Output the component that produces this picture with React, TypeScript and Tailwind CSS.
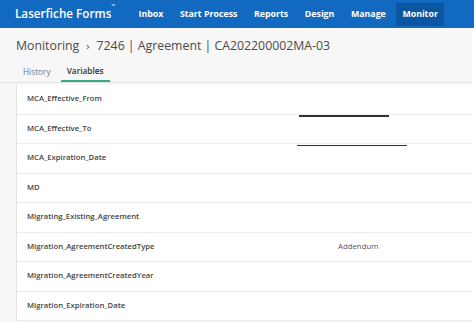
import React from 'react'

const navItems = ['Inbox', 'Start Process', 'Reports', 'Design', 'Manage', 'Monitor']

const rows: { name: string; value?: string; line?: number }[] = [
  { name: 'MCA_Effective_From', line: 90 },
  { name: 'MCA_Effective_To', line: 110 },
  { name: 'MCA_Expiration_Date' },
  { name: 'MD' },
  { name: 'Migrating_Existing_Agreement' },
  { name: 'Migration_AgreementCreatedType', value: 'Addendum' },
  { name: 'Migration_AgreementCreatedYear' },
  { name: 'Migration_Expiration_Date' },
]

export default function App() {
  return (
    <div className="w-[474px] h-[322px] overflow-hidden bg-white font-['Open_Sans',sans-serif]">
      {/* Top bar */}
      <div className="h-[28px] bg-[#1169c0] flex items-center">
        <div className="pl-[15px] w-[132px] text-white text-[11.7px] font-semibold">
          Laserfiche Forms<sup className="text-[5px] align-top relative top-[1px]">™</sup>
        </div>
        <nav className="flex items-center h-full gap-[3.6px]">
          {navItems.map((item) => (
            <div
              key={item}
              className={`h-[23px] mt-[1px] flex items-center px-[6.5px] text-white text-[8.8px] font-bold ${
                item === 'Monitor' ? 'bg-[#0b56a0]' : ''
              }`}
            >
              {item}
            </div>
          ))}
        </nav>
      </div>

      <div className="w-[472px] h-full bg-[#f7f7f7]">
        {/* Title */}
        <div className="pl-[16px] h-[37px] text-[12.3px] text-[#4a4a4a] flex items-center gap-[5px]">
          <span>Monitoring</span>
          <span className="text-[11px] mx-[2px]">›</span>
          <span>7246 | Agreement | CA202200002MA-03</span>
        </div>

        {/* Tabs */}
        <div className="flex items-end h-[18px] pl-[17px] gap-[4px] border-b border-[#e3e3e3] text-[8.3px]">
          <div className="px-[6px] pb-[4px] text-[#777]">History</div>
          <div className="px-[6px] pb-[3px] text-[#333] font-semibold border-b-2 border-[#3aa988]">Variables</div>
        </div>

        {/* Variables table */}
        <div className="mt-[2px] ml-[16px] bg-white border-l border-[#e2e2e2]">
          {rows.map((row) => (
            <div key={row.name} className="h-[29.5px] flex items-center border-b border-[#ececec]">
              <div className="w-[270px] pl-[10px] text-[7.7px] font-semibold text-[#444]">{row.name}</div>
              <div className="flex-1 relative h-full flex items-center">
                {row.value && <span className="pl-[51px] text-[7.8px] text-[#555]">{row.value}</span>}
                {row.line && (
                  <div
                    className={`absolute bottom-[-3px] h-[1.5px] bg-[#333] ${row.line === 90 ? 'left-[12px]' : 'left-[10px]'}`}
                    style={{ width: row.line }}
                  />
                )}
              </div>
            </div>
          ))}
        </div>
      </div>
    </div>
  )
}
